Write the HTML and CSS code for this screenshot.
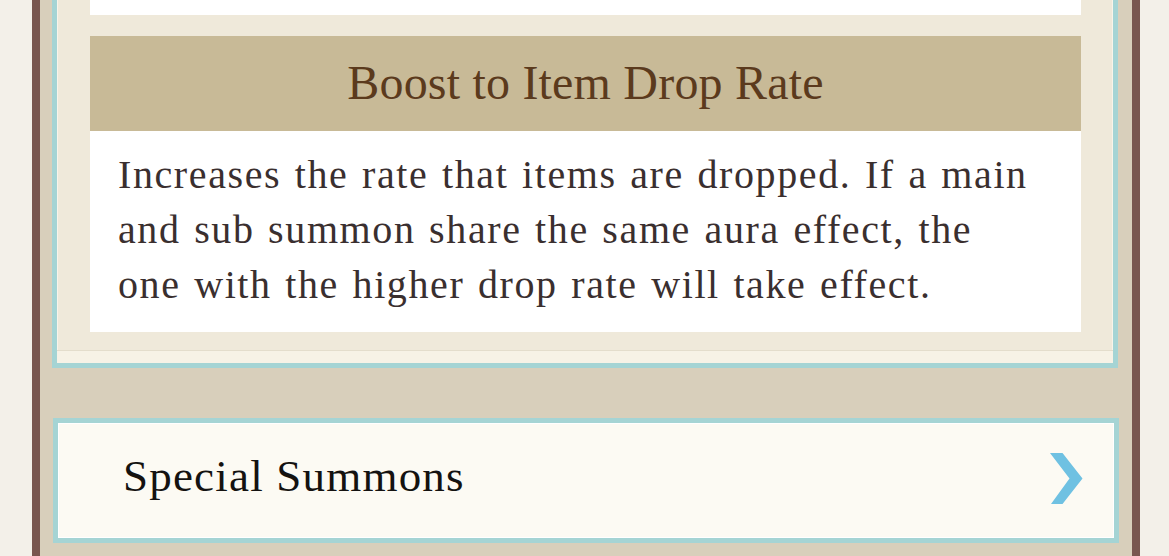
FILE: index.html
```html
<!DOCTYPE html>
<html lang="en">
<head>
<meta charset="utf-8">
<title>Boost to Item Drop Rate</title>
<link rel="stylesheet" href="styles.css">
</head>
<body>
<div class="frame">
  <div class="panel">
    <div class="prev-body"></div>
    <section class="effect">
      <h2 class="effect-title">Boost to Item Drop Rate</h2>
      <p class="effect-text">Increases the rate that items are dropped. If a main and sub summon share the same aura effect, the one with the higher drop rate will take effect.</p>
    </section>
    <div class="panel-foot"></div>
  </div>
  <a class="link-card" href="#">
    <span class="link-label">Special Summons</span>
    <svg class="chevron" width="34" height="52" viewBox="0 0 34 52" aria-hidden="true">
      <polygon points="0,0 12.5,0 32.5,25.5 12.5,51 1,51 19.5,25.5" fill="#6fc1e2"/>
    </svg>
  </a>
</div>
</body>
</html>
```
FILE: styles.css
```css
html, body {
  margin: 0;
  padding: 0;
}
body {
  background: #f3f0e9;
  height: 556px;
  overflow: hidden;
  font-family: "Liberation Serif", "Times New Roman", serif;
}
.frame {
  margin: 0 29px 0 32px;
  border-left: 8px solid #78564f;
  border-right: 8px solid #78564f;
  background: #d8cfbb;
  padding: 0 14px 40px 12px;
  min-height: 556px;
  box-sizing: border-box;
}
.panel {
  background: #efe9da;
  border: 5px solid #a5d4d4;
  border-top: none;
  padding: 0 32px 0 33px;
  display: flex;
  flex-direction: column;
  box-shadow: inset 1px 0 0 #f8f4ea, inset -1px 0 0 #f8f4ea, inset 0 -1px 0 #f8f4ea;
}
.prev-body {
  height: 15px;
  background: #ffffff;
}
.effect {
  margin-top: 21px;
  display: flex;
  flex-direction: column;
}
.effect-title {
  margin: 0;
  height: 95px;
  background: #c8ba97;
  color: #5b3a1d;
  font-weight: normal;
  font-size: 48px;
  letter-spacing: 0.2px;
  display: flex;
  align-items: center;
  justify-content: center;
  padding-bottom: 2px;
  box-sizing: border-box;
}
.effect-text {
  margin: 0;
  background: #ffffff;
  color: #3a2f2f;
  font-size: 40px;
  letter-spacing: 1.6px;
  word-spacing: 2px;
  line-height: 55px;
  padding: 16px 36px 20px 28px;
}
.panel-foot {
  margin: 18px -32px 0 -33px;
  height: 12px;
  background: #f7f2e6;
  border-top: 1px solid #e4ddcc;
}
.link-card {
  margin-top: 50px;
  margin-left: 1px;
  margin-right: -1px;
  height: 125px;
  box-sizing: border-box;
  border: 5px solid #a5d4d4;
  background: #fcfaf3;
  display: flex;
  align-items: center;
  justify-content: space-between;
  padding: 0 30px 0 65px;
  text-decoration: none;
  box-shadow: inset 0 0 0 1px #ffffff;
}
.link-label {
  color: #141210;
  font-size: 45px;
  letter-spacing: 1.2px;
  padding-bottom: 10px;
}
.chevron {
  display: block;
  margin-top: -4px;
}
```
